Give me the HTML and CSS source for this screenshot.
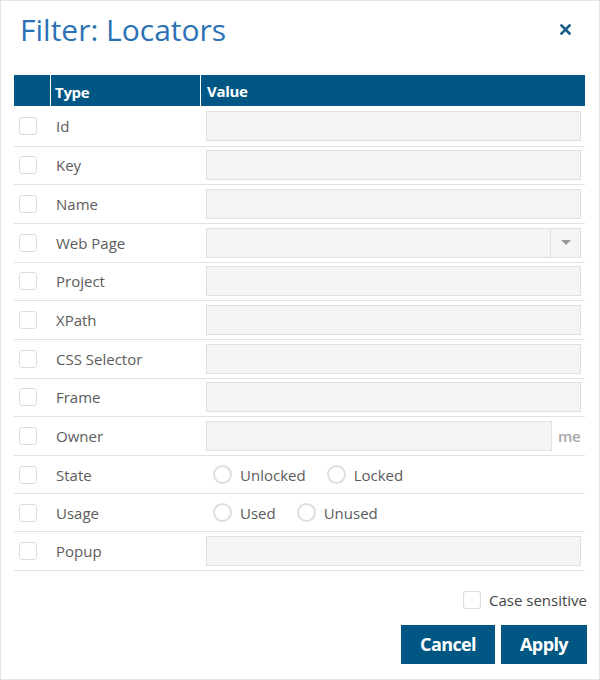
FILE: index.html
```html
<!DOCTYPE html>
<html lang="en">
<head>
  <meta charset="UTF-8">
  <title>Filter: Locators</title>
  <link rel="stylesheet" href="styles.css">
</head>
<body>
  <div class="dialog">
    <div class="head">
      <h1 class="title">Filter: Locators</h1>
      <button class="close" aria-label="Close">
        <svg width="11" height="11" viewBox="0 0 11 11"><path d="M1.5 1.5 L9.5 9.5 M9.5 1.5 L1.5 9.5" stroke="#1a5f8c" stroke-width="2.6" stroke-linecap="square"/></svg>
      </button>
    </div>

    <div class="grid">
      <div class="row header">
        <div class="cell"></div>
        <div class="cell">Type</div>
        <div class="cell">Value</div>
      </div>

      <div class="row first"><div class="cell"><span class="check"></span></div><div class="cell type">Id</div><div class="cell"><input class="field"></div></div>
      <div class="row"><div class="cell"><span class="check"></span></div><div class="cell type">Key</div><div class="cell"><input class="field"></div></div>
      <div class="row"><div class="cell"><span class="check"></span></div><div class="cell type">Name</div><div class="cell"><input class="field"></div></div>
      <div class="row"><div class="cell"><span class="check"></span></div><div class="cell type">Web Page</div><div class="cell">
        <div class="select"><span class="select-text"></span><span class="select-arrow"></span></div>
      </div></div>
      <div class="row"><div class="cell"><span class="check"></span></div><div class="cell type">Project</div><div class="cell"><input class="field"></div></div>
      <div class="row"><div class="cell"><span class="check"></span></div><div class="cell type">XPath</div><div class="cell"><input class="field"></div></div>
      <div class="row"><div class="cell"><span class="check"></span></div><div class="cell type">CSS Selector</div><div class="cell"><input class="field"></div></div>
      <div class="row"><div class="cell"><span class="check"></span></div><div class="cell type">Frame</div><div class="cell"><input class="field"></div></div>
      <div class="row"><div class="cell"><span class="check"></span></div><div class="cell type">Owner</div><div class="cell owner">
        <input class="field"><span class="me">me</span>
      </div></div>
      <div class="row short"><div class="cell"><span class="check"></span></div><div class="cell type">State</div><div class="cell radios">
        <label class="radio"><span class="dot"></span>Unlocked</label>
        <label class="radio"><span class="dot"></span>Locked</label>
      </div></div>
      <div class="row short"><div class="cell"><span class="check"></span></div><div class="cell type">Usage</div><div class="cell radios">
        <label class="radio"><span class="dot"></span>Used</label>
        <label class="radio"><span class="dot"></span>Unused</label>
      </div></div>
      <div class="row"><div class="cell"><span class="check"></span></div><div class="cell type">Popup</div><div class="cell"><input class="field"></div></div>
    </div>

    <div class="case">
      <span class="check"></span>Case sensitive
    </div>

    <div class="actions">
      <button class="btn cancel">Cancel</button>
      <button class="btn apply">Apply</button>
    </div>
  </div>
</body>
</html>
```

FILE: styles.css
```css
body {
  margin: 0;
  font-family: 'Open Sans', 'Noto Sans', sans-serif;
  color: #555;
  background: #fff;
}

.dialog {
  width: 600px;
  height: 680px;
  box-sizing: border-box;
  border: 1px solid #e3e3e3;
  padding: 0 13px 0 13px;
}

.head {
  display: flex;
  align-items: center;
  justify-content: space-between;
  height: 74px;
}

.title {
  margin: 0 0 16px 6px;
  font-size: 30px;
  font-weight: 400;
  color: #2a72b5;
  line-height: 38px;
}

.close {
  border: none;
  background: none;
  padding: 0;
  margin: 0 13px 18px 0;
  width: 16px;
  height: 16px;
  display: flex;
  align-items: center;
  justify-content: center;
  cursor: pointer;
}

.grid {
  width: 571px;
}

.row {
  display: grid;
  grid-template-columns: 36px 150px 1fr;
  height: 38.7px;
  box-sizing: border-box;
  border-bottom: 1px solid #e2e2e2;
  align-items: center;
}

.row.first {
  height: 40.5px;
  padding-top: 1px;
}

.row.short {
  height: 38px;
}

.row.header {
  height: 31px;
  background: #005783;
  color: #fff;
  font-weight: 700;
  font-size: 15px;
  border-bottom: none;
  align-items: stretch;
}

.header .cell {
  display: flex;
  align-items: center;
  padding-top: 2px;
  letter-spacing: -0.3px;
}

.header .cell + .cell {
  border-left: 1px solid #fff;
  padding-left: 4px;
}

.header .cell:last-child {
  padding-left: 2px;
}

.cell {
  box-sizing: border-box;
}

.row .cell:first-child {
  padding-left: 5px;
  display: flex;
}

.type {
  font-size: 15px;
  color: #5c5c5c;
  padding-left: 6px;
}

.row .cell:last-child {
  padding: 0 4px 0 6px;
}

.check {
  display: inline-block;
  width: 18px;
  height: 18px;
  box-sizing: border-box;
  border: 1px solid #dcdcdc;
  border-radius: 3px;
  background: #fff;
}

.field {
  display: block;
  width: 100%;
  height: 30px;
  box-sizing: border-box;
  border: 1px solid #e0e0e0;
  background: #f4f4f4;
  margin: 0;
  padding: 0 6px;
  font: inherit;
}

.select {
  display: flex;
  height: 30px;
  box-sizing: border-box;
  border: 1px solid #e0e0e0;
  background: #f4f4f4;
}

.select-text {
  flex: 1;
}

.select-arrow {
  width: 29px;
  border-left: 1px solid #e0e0e0;
  display: flex;
  align-items: center;
  justify-content: center;
}

.select-arrow::after {
  content: '';
  border-left: 5px solid transparent;
  border-right: 5px solid transparent;
  border-top: 5px solid #999;
}

.owner {
  display: flex;
  align-items: center;
}

.owner .field {
  width: 346px;
}

.me {
  margin-left: 6px;
  font-size: 15px;
  font-weight: 600;
  color: #a9a9a9;
  letter-spacing: -0.3px;
}

.radios {
  display: flex;
  align-items: center;
  gap: 21px;
}

.radios .radio {
  display: flex;
  align-items: center;
  font-size: 15px;
  color: #5c5c5c;
}

.radios .radio:first-child {
  margin-left: 7px;
}

.dot {
  display: inline-block;
  width: 19px;
  height: 19px;
  box-sizing: border-box;
  border: 2px solid #dedede;
  border-radius: 50%;
  margin-right: 8px;
}

.case {
  display: flex;
  justify-content: flex-end;
  align-items: center;
  margin-top: 19px;
  font-size: 15px;
  color: #444;
  width: 573px;
}

.case .check {
  margin-right: 8px;
}

.actions {
  display: flex;
  justify-content: flex-end;
  gap: 6px;
  margin-top: 15px;
  width: 573px;
}

.btn {
  height: 39px;
  border: none;
  background: #005783;
  color: #fff;
  font-family: 'Open Sans', sans-serif;
  font-size: 18px;
  font-weight: 700;
  letter-spacing: -0.6px;
  cursor: pointer;
  padding: 0;
}

.cancel {
  width: 94px;
}

.apply {
  width: 86px;
}
```
